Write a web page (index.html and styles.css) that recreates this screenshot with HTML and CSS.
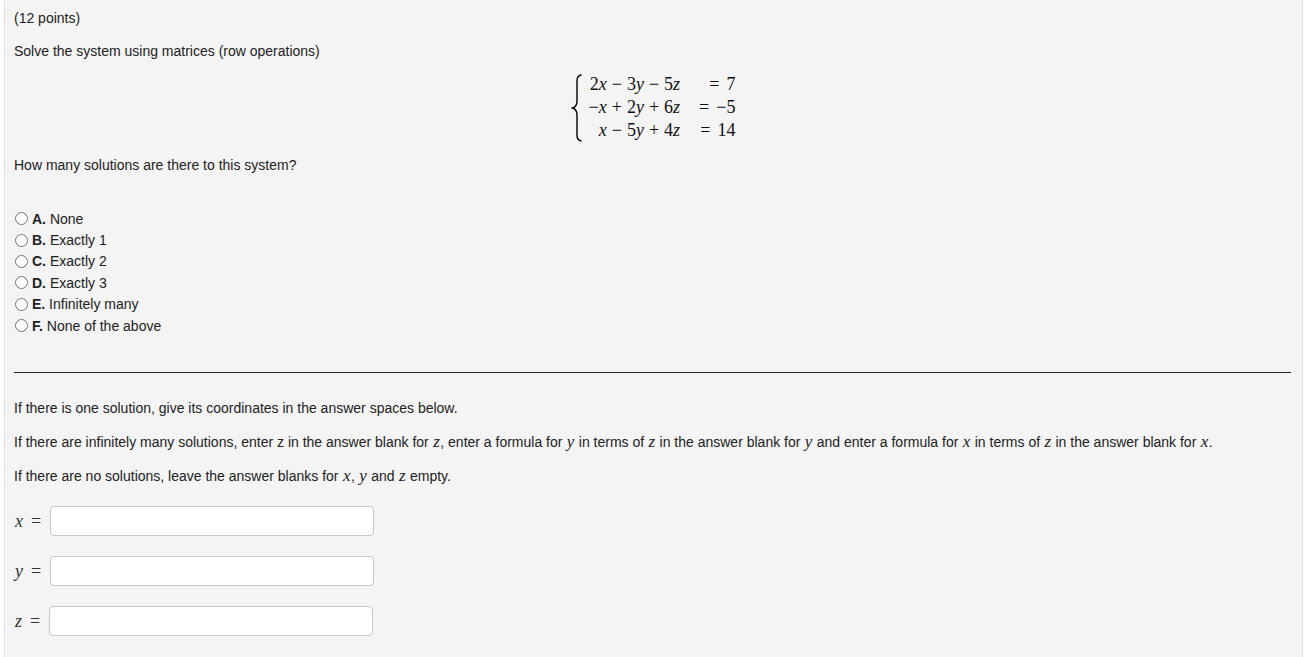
FILE: index.html
```html
<!DOCTYPE html>
<html>
<head>
<meta charset="utf-8">
<link rel="stylesheet" href="styles.css">
</head>
<body>
<div class="page">
  <p class="line first">(12 points)</p>
  <p class="line solve">Solve the system using matrices (row operations)</p>

  <div class="eqwrap">
    <div class="system">
      <svg class="brace" width="12" height="68" viewBox="0 0 12 68">
        <path d="M10.5,1 C7,1.3 6,3 6,7 L6,27 C6,31 5,33 1.5,34 C5,35 6,37 6,41 L6,61 C6,65 7,66.7 10.5,67" fill="none" stroke="#000" stroke-width="1.4"/>
      </svg>
      <div class="rows">
        <div class="lhs"><span class="n">2</span><i>x</i><span class="op">−</span><span class="n">3</span><i>y</i><span class="op">−</span><span class="n">5</span><i>z</i></div>
        <div class="rhs"><span class="eq">=</span><span class="n">7</span></div>
        <div class="lhs"><span class="n">−</span><i>x</i><span class="op">+</span><span class="n">2</span><i>y</i><span class="op">+</span><span class="n">6</span><i>z</i></div>
        <div class="rhs"><span class="eq">=</span><span class="n">−5</span></div>
        <div class="lhs"><i>x</i><span class="op">−</span><span class="n">5</span><i>y</i><span class="op">+</span><span class="n">4</span><i>z</i></div>
        <div class="rhs"><span class="eq">=</span><span class="n">14</span></div>
      </div>
    </div>
  </div>

  <p class="line howmany">How many solutions are there to this system?</p>

  <div class="options">
    <label class="opt"><input type="radio" name="a"><b>A.</b>&nbsp;None</label>
    <label class="opt"><input type="radio" name="a"><b>B.</b>&nbsp;Exactly 1</label>
    <label class="opt"><input type="radio" name="a"><b>C.</b>&nbsp;Exactly 2</label>
    <label class="opt"><input type="radio" name="a"><b>D.</b>&nbsp;Exactly 3</label>
    <label class="opt"><input type="radio" name="a"><b>E.</b>&nbsp;Infinitely many</label>
    <label class="opt"><input type="radio" name="a"><b>F.</b>&nbsp;None of the above</label>
  </div>

  <hr class="rule">

  <p class="line inst">If there is one solution, give its coordinates in the answer spaces below.</p>
  <p class="line inst">If there are infinitely many solutions, enter z in the answer blank for <i class="m">z</i>, enter a formula for <i class="m">y</i> in terms of <i class="m">z</i> in the answer blank for <i class="m">y</i> and enter a formula for <i class="m">x</i> in terms of <i class="m">z</i> in the answer blank for <i class="m">x</i>.</p>
  <p class="line inst">If there are no solutions, leave the answer blanks for <i class="m">x</i>, <i class="m">y</i> and <i class="m">z</i> empty.</p>

  <div class="answers">
    <div class="ans"><span class="albl"><i>x</i><span class="eq">=</span></span><input class="box bx" type="text"></div>
    <div class="ans"><span class="albl"><i>y</i><span class="eq">=</span></span><input class="box" type="text"></div>
    <div class="ans"><span class="albl"><i>z</i><span class="eq">=</span></span><input class="box" type="text"></div>
  </div>
</div>
</body>
</html>
```

FILE: styles.css
```css
html, body {
  margin: 0;
  padding: 0;
  background: #ffffff;
}
body {
  font-family: "Liberation Sans", Arial, sans-serif;
  font-size: 14px;
  color: #222;
}
.page {
  margin-left: 4px;
  width: 1299px;
  min-height: 657px;
  box-sizing: border-box;
  border-left: 1px solid #e0e0e0;
  border-right: 1px solid #dcdcdc;
  background: #f4f4f4;
  padding: 10px 11px 0 9px;
}
.line {
  margin: 0;
  line-height: 16px;
}
.solve { margin-top: 17px; }

.eqwrap {
  display: flex;
  justify-content: center;
  margin-top: 14px;
}
.system {
  display: flex;
  align-items: center;
  margin-left: 1px;
  font-family: "Liberation Serif", "Times New Roman", serif;
  font-size: 18px;
  color: #111;
}
.brace { display: block; margin-right: 6px; }
.rows {
  display: grid;
  grid-template-columns: auto auto;
  grid-auto-rows: 23px;
  column-gap: 19px;
  align-items: center;
}
.lhs, .rhs { text-align: right; white-space: nowrap; }
.system i { font-style: italic; }
.op { padding: 0 5px; }
.rhs .eq { padding-right: 7px; }

.howmany { margin-top: 15px; }

.options {
  margin-top: 35px;
  display: flex;
  flex-direction: column;
}
.opt {
  display: flex;
  align-items: center;
  height: 21.4px;
  color: #222;
}
.opt b { font-weight: bold; }
.opt input {
  appearance: none;
  -webkit-appearance: none;
  width: 13px;
  height: 13px;
  margin: 0 4px 0 1px;
  border: 1px solid #777;
  border-radius: 50%;
  background: #fff;
  box-sizing: border-box;
}

.rule {
  border: 0;
  border-top: 1px solid #222;
  margin: 36px 0 0 0;
  height: 0;
}

.inst { margin-top: 18px; }
.rule + .inst { margin-top: 27px; }
.m {
  font-family: "Liberation Serif", "Times New Roman", serif;
  font-size: 17px;
  font-style: italic;
  padding: 0 0.5px;
}

.answers {
  margin-top: 22px;
  display: flex;
  flex-direction: column;
  gap: 20px;
}
.ans {
  display: flex;
  align-items: center;
  height: 30px;
}
.albl {
  font-family: "Liberation Serif", "Times New Roman", serif;
  font-size: 18px;
  color: #333;
  padding-left: 1px;
  margin-right: 9px;
}
.albl i { font-style: italic; }
.albl .eq { padding-left: 8px; }
.box {
  width: 324px;
  height: 30px;
  box-sizing: border-box;
  border: 1px solid #c8c8c8;
  border-radius: 4px;
  background: #fff;
  margin: 0;
  padding: 4px 6px;
}
```
